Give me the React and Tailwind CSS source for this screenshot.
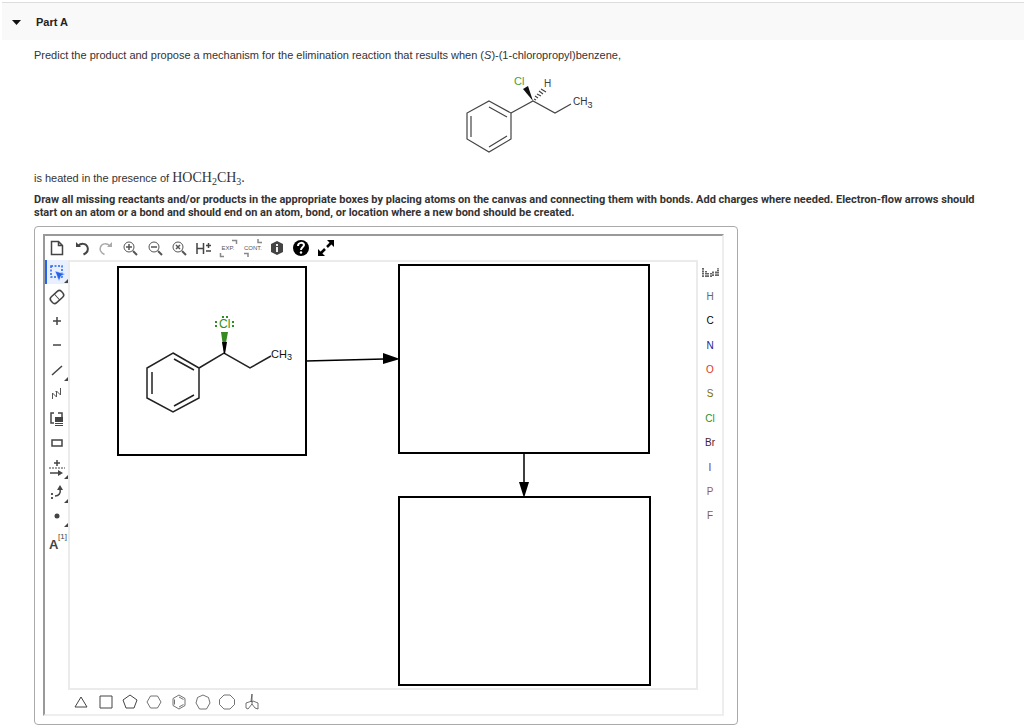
import React, { useState } from 'react';

// Corner mark for tools that open a submenu
const SubmenuMark = () => <path d="M23 19v4h-4z" fill="#444" />;

const Magnifier = ({ children }) => (
  <g stroke="#555" fill="none">
    <circle cx="11" cy="11" r="5" />
    <path d="M15 15l4 4" strokeWidth="2" />
    {children}
  </g>
);

const topTools = [
  {
    label: 'New',
    icon: <path d="M6.5 5.5h7l4 4v9h-11zM13.5 5.5v4h4" fill="none" stroke="#444" strokeWidth="1.5" />,
  },
  {
    label: 'Undo',
    icon: (
      <g>
        <path d="M8 10c3-3 8-3 9.500 1s-1 6-4 7.500" fill="none" stroke="#444" strokeWidth="2" />
        <path d="M6 6v5h5z" fill="#444" />
      </g>
    ),
  },
  {
    label: 'Redo',
    icon: (
      <g>
        <path d="M16 10c-3-3-8-3-9.500 1s1 6 4 7.500" fill="none" stroke="#aaa" strokeWidth="1.5" />
        <path d="M18 6v5h-5z" fill="#aaa" />
      </g>
    ),
  },
  { label: 'Zoom in', icon: <Magnifier><path d="M8 11h6M11 8v6" strokeWidth="1.5" /></Magnifier> },
  { label: 'Zoom out', icon: <Magnifier><path d="M8 11h6" strokeWidth="1.5" /></Magnifier> },
  { label: 'Reset zoom', icon: <Magnifier><path d="M9 9l4 4M13 9l-4 4" strokeWidth="1.5" /></Magnifier> },
  {
    label: 'Show hydrogens',
    icon: (
      <path d="M5 7v11M11.500 7v11M5 12.500h6.500M14 9.500h5M16.500 7v5M14 15h5" fill="none" stroke="#444" strokeWidth="1.5" />
    ),
  },
  {
    label: 'Expand',
    icon: (
      <g>
        <path d="M16 4.500h4.500V8M4.500 17v3.500H8" fill="none" stroke="#888" strokeWidth="1.5" />
        <text x="12" y="14" textAnchor="middle" fontSize="6" fill="#555">EXP.</text>
      </g>
    ),
  },
  {
    label: 'Contract',
    icon: (
      <g>
        <path d="M17 3v3.500h4M3 17.500h4V21" fill="none" stroke="#888" strokeWidth="1.5" />
        <text x="12" y="14" textAnchor="middle" fontSize="6" fill="#555">CONT.</text>
      </g>
    ),
  },
  {
    label: 'Information',
    icon: (
      <g>
        <path d="M12 5l6 3v8l-6 3-6-3V8z" fill="#444" />
        <path d="M12 8v2M12 11v5" stroke="#eee" strokeWidth="2" />
      </g>
    ),
  },
  {
    label: 'Help',
    icon: (
      <g>
        <circle cx="12" cy="12" r="8" fill="#000" />
        <path d="M9 10c0-4 6-4 6-1 0 2-3 2-3 5" fill="none" stroke="#fff" strokeWidth="2" />
        <circle cx="12" cy="16.500" r="1.200" fill="#fff" />
      </g>
    ),
  },
  {
    label: 'Full screen',
    icon: (
      <g fill="#000">
        <path d="M13 4h7v7zM4 13v7h7z" />
        <path d="M13 11l5-5M6 18l5-5" stroke="#000" strokeWidth="2.5" />
      </g>
    ),
  },
];

const sideTools = [
  {
    label: 'Select',
    icon: (
      <g>
        <path d="M6 6h11v11H6z" fill="none" stroke="#2563eb" strokeWidth="1.5" strokeDasharray="2 1.5" />
        <path d="M10 11l10 3-4 2-2 5z" fill="#2563eb" stroke="#e8f0ff" strokeWidth="0.5" />
        <SubmenuMark />
      </g>
    ),
  },
  {
    label: 'Erase',
    icon: (
      <g transform="rotate(-42 12 12)" fill="none" stroke="#444" strokeWidth="1.5">
        <rect x="5" y="8" width="14" height="8" rx="3" />
        <path d="M12 8v8" strokeWidth="1" />
      </g>
    ),
  },
  { label: 'Increase charge', icon: <path d="M8 12h8M12 8v8" stroke="#444" strokeWidth="1.5" /> },
  { label: 'Decrease charge', icon: <path d="M8 12h8" stroke="#444" strokeWidth="1.5" /> },
  {
    label: 'Single bond',
    icon: (
      <g>
        <path d="M7 17L17 8" stroke="#444" strokeWidth="1.5" />
        <SubmenuMark />
      </g>
    ),
  },
  {
    label: 'Chain',
    icon: <path d="M7.500 17v-6l4 4V9l4 4V6M11.500 9l-1 1" fill="none" stroke="#555" />,
  },
  {
    label: 'Templates',
    icon: (
      <g>
        <path d="M9 6H6v10h3M13 6h4v5" fill="none" stroke="#444" strokeWidth="1.5" />
        <path d="M10 10h8v5h-8zM10 16h8v1h-8zM10 18h8v1h-8z" fill="#444" />
      </g>
    ),
  },
  {
    label: 'Rectangle',
    icon: <path d="M7 9h10v6H7z" fill="none" stroke="#444" strokeWidth="1.5" />,
  },
  {
    label: 'Reaction arrow',
    icon: (
      <g>
        <path d="M12 4v6M9 7h6" stroke="#444" strokeWidth="1.5" />
        <path d="M4 12h16" stroke="#444" strokeDasharray="2 1" />
        <path d="M5 17h9" stroke="#444" strokeWidth="1.5" />
        <path d="M13 14l5 3-5 3z" fill="#444" />
        <SubmenuMark />
      </g>
    ),
  },
  {
    label: 'Electron flow',
    icon: (
      <g>
        <path d="M10 16c4 0 6-3 5-7" fill="none" stroke="#444" strokeWidth="1.5" />
        <path d="M12 10l3-5 3 5z" fill="#444" />
        <path d="M6 13h2v2H6zM6 17h2v2H6z" fill="#555" />
        <SubmenuMark />
      </g>
    ),
  },
  {
    label: 'Radical',
    icon: (
      <g>
        <circle cx="12" cy="12" r="2.5" fill="#444" />
        <SubmenuMark />
      </g>
    ),
  },
  {
    label: 'Atom map',
    icon: (
      <g fill="#444">
        <text x="4" y="20" fontSize="13" fontWeight="bold">A</text>
        <text x="13" y="10" fontSize="8">[1]</text>
      </g>
    ),
  },
];

const rings = [
  { label: 'Cyclopropane', icon: <path d="M12 7l6 10H6z" /> },
  { label: 'Cyclobutane', icon: <path d="M6 6h12v12H6z" /> },
  { label: 'Cyclopentane', icon: <path d="M12 5l7 5-3 8H8l-3-8z" /> },
  { label: 'Cyclohexane', icon: <path d="M8.500 6h7l3.500 6-3.500 6h-7L5 12z" strokeWidth="0.75" /> },
  {
    label: 'Benzene',
    icon: <path d="M12 5l6 3.500v7L12 19l-6-3.500v-7zM12 7l4.500 2.500M16.500 14.500L12 17M7.500 9.500v5" strokeWidth="0.75" />,
  },
  { label: 'Cycloheptane', icon: <path d="M12 5l5.500 2.500L19 13l-3.500 6h-7L5 13l1.500-5.500z" strokeWidth="0.75" /> },
  { label: 'Cyclooctane', icon: <path d="M9 5h6l4.500 4.500v5L15 19H9l-4.500-4.500v-5z" strokeWidth="0.75" /> },
  {
    label: 'Bicyclic ring',
    icon: <path d="M12 4v10M12 4l-1 7 2 1M12 11l-6 2v5l2 1 4-5 3 4 3 1v-6l-5-2" strokeWidth="0.75" />,
  },
];

const elements = [
  { symbol: 'H', color: 'text-[#666]' },
  { symbol: 'C', color: 'text-black' },
  { symbol: 'N', color: 'text-[#22229a]' },
  { symbol: 'O', color: 'text-[#e03428]' },
  { symbol: 'S', color: 'text-[#7b6f08]' },
  { symbol: 'Cl', color: 'text-[#2c8f20]' },
  { symbol: 'Br', color: 'text-[#4d2222]' },
  { symbol: 'I', color: 'text-[#6b22a8]' },
  { symbol: 'P', color: 'text-[#a0660a]' },
  { symbol: 'F', color: 'text-[#8a6416]' },
];

const ToolIcon = ({ children }) => (
  <svg viewBox="0 0 24 24" className="size-6 shrink-0" aria-hidden="true">
    {children}
  </svg>
);

// (S)-(1-chloropropyl)benzene shown in the question text
const QuestionMolecule = () => (
  <svg
    viewBox="460 74 138 84"
    className="mx-auto mt-3 block h-[84px] w-[138px]"
    role="img"
    aria-label="(S)-(1-chloropropyl)benzene"
  >
    <g fill="none" stroke="#444" strokeWidth="1.2">
      <path d="M489 101l22 12v26l-22 13-22-13v-26z" />
      <path d="M489 107l18 10M471 116v21M489 147l18-11" />
      <path d="M511 113l22-12 22 12 16-9" />
      <path d="M534 99l2 1M535 96l3 2M537 94l4 2M539 91l4 3M541 89l5 3" />
    </g>
    <path d="M533 101l-10-12 5-3z" fill="#111" />
    <text x="514" y="85" fontSize="11" fill="#4a9e3c">Cl</text>
    <text x="544" y="87" fontSize="10" fill="#444">H</text>
    <text x="573" y="105" fontSize="10" fill="#333">CH<tspan fontSize="9" dy="3">3</tspan></text>
  </svg>
);

const ReactionCanvas = () => (
  <svg viewBox="70 262 626 426" className="block h-auto w-full" role="img" aria-label="Reaction scheme">
    <g fill="none" stroke="#000" strokeWidth="2">
      <rect x="118" y="267" width="188" height="188" />
      <rect x="399" y="265" width="250" height="188" />
      <rect x="399" y="497" width="251" height="188" />
    </g>
    <path d="M306 361l78-2M524 454v30" stroke="#000" strokeWidth="1.5" />
    <path d="M383 353l17 6-17 5zM519 482h10l-5 16z" fill="#000" />

    {/* Starting material */}
    <g fill="none" stroke="#222" strokeWidth="1.5">
      <path d="M173 353l26 15v30l-26 14-26-14v-30z" />
      <path d="M174 359l20 11M152 372v22M174 406l20-11" />
      <path d="M199 368l25-15 26 15 21-12" />
    </g>
    <path d="M221 332h7l-4 21z" fill="#358a22" />
    <path d="M222 342h5l-2 12h-1z" fill="#000" />
    <text x="219" y="328" fontSize="12" fill="#2c8f20">Cl</text>
    <g fill="#2c8f20">
      <path d="M215 321h2v2h-2zM215 325h2v2h-2zM232 321h2v2h-2zM232 325h2v2h-2zM222 316h2v2h-2zM226 316h2v2h-2z" />
    </g>
    <text x="271" y="358" fontSize="11" fill="#111">CH<tspan fontSize="9" dy="2">3</tspan></text>
  </svg>
);

const DrawingEditor = () => {
  const [activeTool, setActiveTool] = useState('Select');

  return (
    <div className="mt-[7px] w-full max-w-[704px] rounded border border-[#aaa] pt-[7px] pr-[13px] pb-2 pl-2">
      <div className="border-2 border-t-[#999] border-r-[#eee] border-b-[#eee] border-l-[#999]">
        {/* Top toolbar */}
        <div className="flex h-6 w-[293px]">
          {topTools.map((tool) => (
            <button key={tool.label} aria-label={tool.label} className="flex flex-1 items-center justify-center">
              <ToolIcon>{tool.icon}</ToolIcon>
            </button>
          ))}
        </div>

        <div className="flex">
          {/* Drawing tools */}
          <div className="flex h-[293px] w-[23px] shrink-0 flex-col">
            {sideTools.map((tool) => (
              <button
                key={tool.label}
                aria-label={tool.label}
                onClick={() => setActiveTool(tool.label)}
                className={`flex w-full flex-1 items-center overflow-hidden ${
                  activeTool === tool.label ? 'bg-[#e8f0ff] shadow-[inset_2px_0_0_#2563eb]' : ''
                }`}
              >
                <ToolIcon>{tool.icon}</ToolIcon>
              </button>
            ))}
          </div>

          <div className="min-w-0 flex-1 border-2 border-[#ebebeb]">
            <ReactionCanvas />
          </div>

          {/* Element palette */}
          <div className="flex h-[268px] w-6 shrink-0 flex-col text-[10px]">
            <button aria-label="Periodic table" className="flex flex-1 items-center justify-center">
              <ToolIcon>
                <path
                  d="M5 17V8M8 17v-6M10 17v-4M13 17v-4M15 16v-5M18 16v-5M20 16V8"
                  stroke="#555"
                  strokeWidth="1.8"
                  strokeDasharray="1.8 0.6"
                />
              </ToolIcon>
            </button>
            {elements.map((el) => (
              <button key={el.symbol} className={`flex flex-1 items-center justify-center ${el.color}`}>
                {el.symbol}
              </button>
            ))}
          </div>
        </div>

        {/* Ring templates */}
        <div className="ml-6 flex h-6 w-[195px]">
          {rings.map((ring) => (
            <button key={ring.label} aria-label={ring.label} className="flex flex-1 items-center justify-center">
              <ToolIcon>
                <g fill="none" stroke="#444">{ring.icon}</g>
              </ToolIcon>
            </button>
          ))}
        </div>
      </div>
    </div>
  );
};

const App = () => {
  const [open, setOpen] = useState(true);

  return (
    <main className="bg-white pt-[2px] font-['Liberation_Sans',Arial,sans-serif] text-[11px] text-[#333]">
      <h2 className="ml-[2px] border-t border-[#ddd] bg-[#f9f9f9] font-bold">
        <button
          onClick={() => setOpen(!open)}
          aria-expanded={open}
          className="flex h-[37px] w-full items-center gap-[15px] pt-[2px] pl-[10px] text-[#222]"
        >
          <svg viewBox="0 0 9 5" className="h-[5px] w-[9px]" aria-hidden="true">
            <path d="M0 0h9L4.500 5z" fill="#111" />
          </svg>
          Part A
        </button>
      </h2>

      {open && (
        <div className="pt-[9px] pl-[34px]">
          <p className="leading-[13px]">
            Predict the product and propose a mechanism for the elimination reaction that results when (<i>S</i>)-(1-chloropropyl)benzene,
          </p>
          <QuestionMolecule />
          <p className="mt-[10px] leading-5">
            is heated in the presence of{' '}
            <span className="font-['Liberation_Serif','Times_New_Roman',serif] text-[14px]">
              HOCH<sub className="text-[10px]">2</sub>CH<sub className="text-[10px]">3</sub>.
            </span>
          </p>
          {/* Roboto sets narrower here, so the first line holds up to "should" */}
          <p className="mt-[5px] pr-8 font-[Roboto,Arial,sans-serif] leading-[13px] font-bold">
            Draw all missing reactants and/or products in the appropriate boxes by placing atoms on the canvas and connecting
            them with bonds. Add charges where needed. Electron-flow arrows should start on an atom or a bond and should end
            on an atom, bond, or location where a new bond should be created.
          </p>
          <DrawingEditor />
        </div>
      )}
    </main>
  );
};

export default App;
